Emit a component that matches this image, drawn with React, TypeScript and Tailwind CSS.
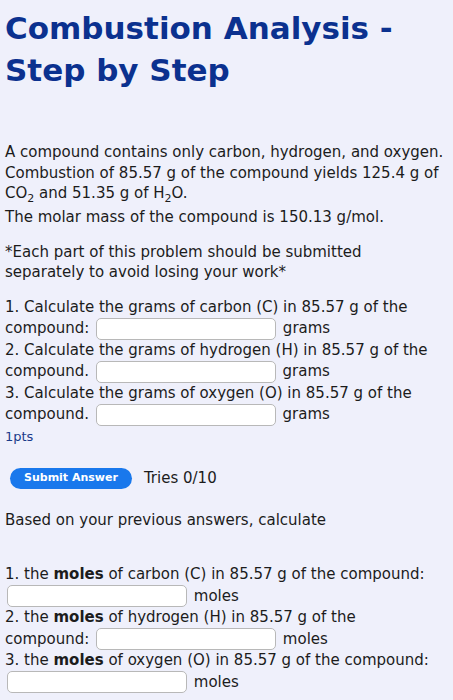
import React from 'react';

const Box: React.FC = () => (
    <input type="text" className="w-[180px] h-[22px] align-middle bg-white border border-[#b8b8b8] rounded-[5px] mx-[2px] -my-[2px]" />
);

const Sub: React.FC<{ children: React.ReactNode }> = ({ children }) => (
    <span className="text-[11px] leading-none align-[-4px]">{children}</span>
);

const App: React.FC = () => {
    return (
        <div className="min-h-[700px] bg-[#eff0fb] text-[#1c1c1c] px-[5px] text-[15px] leading-[20.5px]" style={{ fontFamily: '"DejaVu Sans", Verdana, sans-serif' }}>
            <h1 className="pt-[7px] text-[31px] leading-[42px] font-bold text-[#0b318f]">Combustion Analysis -<br />Step by Step</h1>

            <div className="mt-[51px]">
                <p>A compound contains only carbon, hydrogen, and oxygen. Combustion of 85.57 g of the compound yields 125.4 g of CO<Sub>2</Sub> and 51.35 g of H<Sub>2</Sub>O.</p>
                <p className="mt-[3px]">The molar mass of the compound is 150.13 g/mol.</p>
                <p className="mt-[14px]">*Each part of this problem should be submitted<br />separately to avoid losing your work*</p>
            </div>

            <div className="mt-[14px] leading-[21.5px]">
                <p>1. Calculate the grams of carbon (C) in 85.57 g of the compound: <Box /> grams</p>
                <p>2. Calculate the grams of hydrogen (H) in 85.57 g of the compound. <Box /> grams</p>
                <p>3. Calculate the grams of oxygen (O) in 85.57 g of the compound. <Box /> grams</p>
                <p className="text-[13px] text-[#1b3b8a] leading-[22px]">1pts</p>
            </div>

            <div className="mt-[20px] flex items-center gap-[12px] pl-[5px]">
                <button className="h-[21px] px-[14px] rounded-full bg-[#1978ec] text-white text-[11px] font-bold">Submit Answer</button>
                <span>Tries 0/10</span>
            </div>

            <p className="mt-[21px]">Based on your previous answers, calculate</p>

            <div className="mt-[34px] leading-[21.5px]">
                <p>1. the <b>moles</b> of carbon (C) in 85.57 g of the compound: <Box /> moles</p>
                <p>2. the <b>moles</b> of hydrogen (H) in 85.57 g of the<br />compound: <Box /> moles</p>
                <p>3. the <b>moles</b> of oxygen (O) in 85.57 g of the compound: <Box /> moles</p>
            </div>
        </div>
    );
};

export default App;
